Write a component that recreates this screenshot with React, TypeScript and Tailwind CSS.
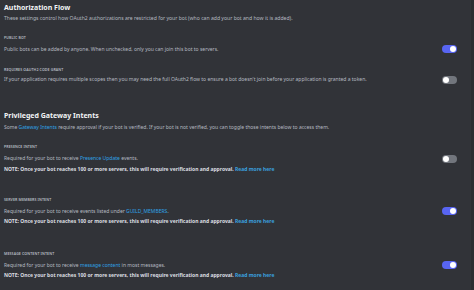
import React from "react";

function Toggle({ on }: { on: boolean }) {
  return on ? (
    <div className="w-[15px] h-[8px] rounded-full bg-[#5865f2] flex items-center justify-end pr-[1px] shrink-0">
      <div className="w-[6px] h-[6px] rounded-full bg-white" />
    </div>
  ) : (
    <div className="w-[15px] h-[8px] rounded-full bg-[#72767d] flex items-center justify-start pl-[1px] shrink-0">
      <div className="w-[6px] h-[6px] rounded-full bg-white" />
    </div>
  );
}

const Link = ({ children }: { children: React.ReactNode }) => (
  <span className="text-[#2fa2e6]">{children}</span>
);

function Note() {
  return (
    <div className="text-[5px] leading-[7px] font-bold text-[#dbdee1]">
      NOTE: Once your bot reaches 100 or more servers, this will require verification and approval.{" "}
      <span className="text-[#3aa0df]">Read more here</span>
    </div>
  );
}

function Label({ children }: { children: React.ReactNode }) {
  return (
    <div className="text-[3.6px] leading-[6px] font-semibold uppercase text-[#b5bac1] tracking-[0.1px]">
      {children}
    </div>
  );
}

function Row({ children, on }: { children: React.ReactNode; on: boolean }) {
  return (
    <div className="flex items-center justify-between pr-[17px]">
      <div className="text-[5px] leading-[7px] text-[#b5bac1]">{children}</div>
      <Toggle on={on} />
    </div>
  );
}

export default function App() {
  return (
    <div
      className="w-[474px] h-[290px] bg-[#313338] overflow-hidden relative"
      style={{ fontFamily: '"Noto Sans", "Open Sans", sans-serif' }}
    >
      <div className="absolute right-0 top-0 w-[3px] h-full bg-[#2b2d31]" />
      <div className="pl-[4px] pt-[3px] flex flex-col">
        <div className="text-[7px] leading-[9px] font-bold text-[#f2f3f5]">Authorization Flow</div>
        <div className="mt-[2.5px] text-[5.1px] leading-[7px] text-[#b5bac1]">
          These settings control how OAuth2 authorizations are restricted for your bot (who can add your bot and how it is added).
        </div>

        <div className="mt-[13.5px]">
          <Label>Public Bot</Label>
        </div>
        <div className="mt-[4px]">
          <Row on={true}>Public bots can be added by anyone. When unchecked, only you can join this bot to servers.</Row>
        </div>

        <div className="mt-[13.5px]">
          <Label>Requires OAuth2 Code Grant</Label>
        </div>
        <div className="mt-[3px]">
          <Row on={false}>
            If your application requires multiple scopes then you may need the full OAuth2 flow to ensure a bot doesn't join before your application is granted a token.
          </Row>
        </div>

        <div className="mt-[27.5px] text-[7px] leading-[9px] font-bold text-[#f2f3f5]">Privileged Gateway Intents</div>
        <div className="mt-[4px] text-[5px] leading-[7px] text-[#b5bac1]">
          Some <Link>Gateway Intents</Link> require approval if your bot is verified. If your bot is not verified, you can toggle those intents below to access them.
        </div>

        <div className="mt-[13px]">
          <Label>Presence Intent</Label>
        </div>
        <div className="mt-[4.5px]">
          <Row on={false}>
            Required for your bot to receive <Link>Presence Update</Link> events.
          </Row>
        </div>
        <div className="mt-[3px]">
          <Note />
        </div>

        <div className="mt-[24px]">
          <Label>Server Members Intent</Label>
        </div>
        <div className="mt-[4.5px]">
          <Row on={true}>
            Required for your bot to receive events listed under <Link>GUILD_MEMBERS</Link>.
          </Row>
        </div>
        <div className="mt-[3px]">
          <Note />
        </div>

        <div className="mt-[25.5px]">
          <Label>Message Content Intent</Label>
        </div>
        <div className="mt-[4.5px]">
          <Row on={true}>
            Required for your bot to receive <Link>message content</Link> in most messages.
          </Row>
        </div>
        <div className="mt-[3px]">
          <Note />
        </div>
      </div>
    </div>
  );
}
